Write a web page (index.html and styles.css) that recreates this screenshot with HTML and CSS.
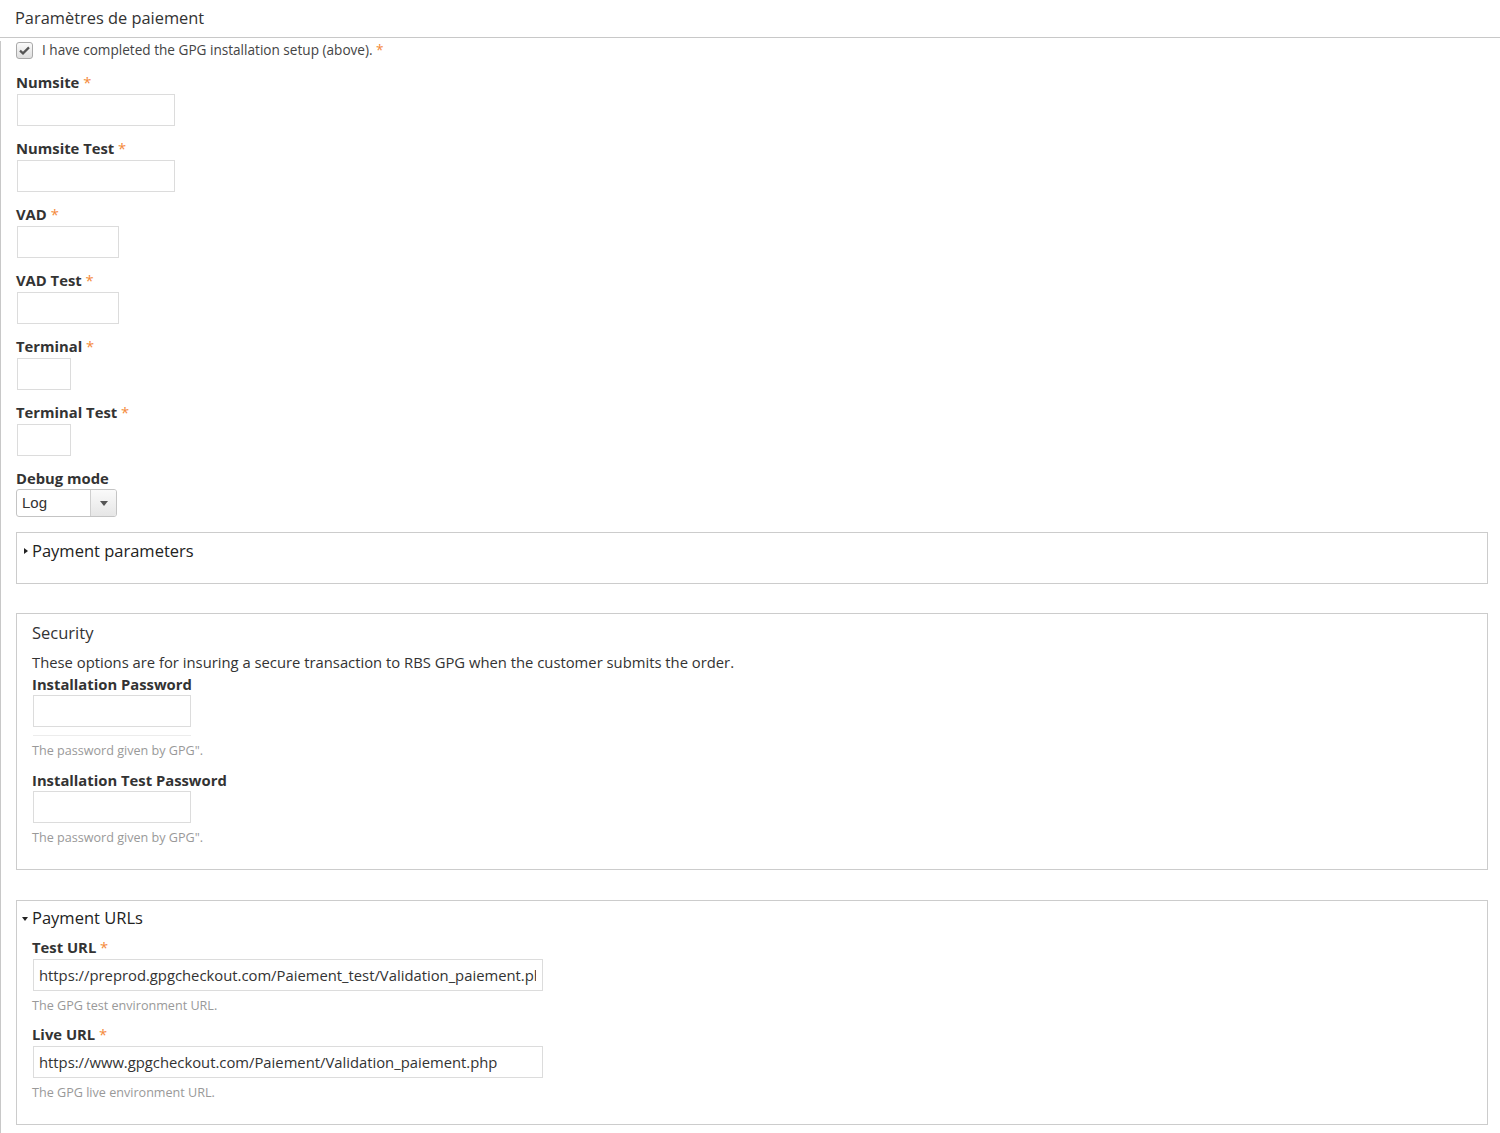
FILE: index.html
```html
<!DOCTYPE html>
<html lang="fr">
<head>
<meta charset="utf-8">
<title>Paramètres de paiement</title>
<link rel="stylesheet" href="styles.css">
</head>
<body>
<div class="outer">
  <div class="outer-legend">Paramètres de paiement</div>
  <div class="outer-body">
    <div class="check-row">
      <span class="checkbox"><svg width="11" height="9" viewBox="0 0 11 9"><path d="M1 4.6 L4 7.4 L10 1.4" fill="none" stroke="#555" stroke-width="2.2"/></svg></span>
      <span class="check-label">I have completed the GPG installation setup (above). <span class="req">*</span></span>
    </div>

    <div class="field">
      <label class="lbl">Numsite <span class="req">*</span></label>
      <input class="inp w158" type="text">
    </div>
    <div class="field">
      <label class="lbl">Numsite Test <span class="req">*</span></label>
      <input class="inp w158" type="text">
    </div>
    <div class="field">
      <label class="lbl">VAD <span class="req">*</span></label>
      <input class="inp w102" type="text">
    </div>
    <div class="field">
      <label class="lbl">VAD Test <span class="req">*</span></label>
      <input class="inp w102" type="text">
    </div>
    <div class="field">
      <label class="lbl">Terminal <span class="req">*</span></label>
      <input class="inp w54" type="text">
    </div>
    <div class="field">
      <label class="lbl">Terminal Test <span class="req">*</span></label>
      <input class="inp w54" type="text">
    </div>
    <div class="field">
      <label class="lbl lbl-select">Debug mode</label>
      <div class="select">
        <span class="select-text">Log</span>
        <span class="select-btn"><span class="select-arrow"></span></span>
      </div>
    </div>

    <div class="box box-collapsed">
      <div class="box-legend"><span class="tri-right"></span>Payment parameters</div>
    </div>

    <div class="box box-security">
      <div class="box-title">Security</div>
      <div class="box-desc">These options are for insuring a secure transaction to RBS GPG when the customer submits the order.</div>
      <label class="lbl lbl-sec">Installation Password</label>
      <input class="inp w158" type="text">
      <div class="sep"></div>
      <div class="desc desc-sep">The password given by GPG".</div>
      <label class="lbl lbl-gap">Installation Test Password</label>
      <input class="inp w158" type="text">
      <div class="desc">The password given by GPG".</div>
    </div>

    <div class="box box-urls">
      <div class="box-legend"><span class="tri-down"></span>Payment URLs</div>
      <label class="lbl lbl-url">Test URL <span class="req">*</span></label>
      <input class="inp url" type="text" value="https://preprod.gpgcheckout.com/Paiement_test/Validation_paiement.php">
      <div class="desc">The GPG test environment URL.</div>
      <label class="lbl lbl-gap2">Live URL <span class="req">*</span></label>
      <input class="inp url" type="text" value="https://www.gpgcheckout.com/Paiement/Validation_paiement.php">
      <div class="desc">The GPG live environment URL.</div>
    </div>
  </div>
</div>
</body>
</html>
```

FILE: styles.css
```css
* { box-sizing: border-box; }
html, body {
  margin: 0;
  padding: 0;
  background: #fff;
}
body {
  font-family: "Open Sans", "Noto Sans", sans-serif;
  color: #333;
  width: 1500px;
  height: 1133px;
  overflow: hidden;
}
.outer {
  width: 1500px;
}
.outer-legend {
  height: 38px;
  padding: 7px 0 0 15px;
  font-size: 16.4px;
  line-height: 22px;
  color: #333;
  border-bottom: 1px solid #c8c8c8;
}
.outer-body {
  border-left: 1px solid #c8c8c8;
  padding: 0 12px 20px 15px;
}
.check-row {
  display: flex;
  align-items: center;
  margin-top: 3px;
  height: 19px;
}
.checkbox {
  width: 17px;
  height: 17px;
  border: 1px solid #a9a9a9;
  border-radius: 3px;
  background: linear-gradient(#fbfbfb, #dedede);
  display: flex;
  align-items: center;
  justify-content: center;
  margin-right: 9px;
}
.check-label {
  font-size: 13.6px;
  color: #444;
  line-height: 19px;
  position: relative;
  top: -1px;
}
.req {
  color: #f4893a;
  font-weight: normal;
}
.field {
  margin-top: 12px;
}
.lbl {
  display: block;
  font-size: 14.8px;
  font-weight: bold;
  line-height: 20px;
  margin-bottom: 2px;
  color: #333;
}
.lbl-select {
  margin-bottom: 1px;
}
.inp {
  display: block;
  height: 32px;
  margin: 0 0 0 1px;
  border: 1px solid #dcdcdc;
  background: #fff;
  font-family: "Open Sans", "Noto Sans", sans-serif;
  font-size: 14.8px;
  color: #333;
  padding: 0 6px 0 5px;
  outline: none;
}
.w158 { width: 158px; }
.w102 { width: 102px; }
.w54 { width: 54px; }
.url { width: 510px; }
.select {
  display: flex;
  width: 101px;
  height: 28px;
  border: 1px solid #c4c4c4;
  border-radius: 3px;
  background: #fff;
  overflow: hidden;
}
.select-text {
  flex: 1;
  font-family: "Liberation Sans", Arial, sans-serif;
  font-size: 15px;
  line-height: 26px;
  padding-left: 5px;
  color: #333;
}
.select-btn {
  width: 26px;
  border-left: 1px solid #cfcfcf;
  background: linear-gradient(#fafafa, #e6e6e6);
  display: flex;
  align-items: center;
  justify-content: center;
}
.select-arrow {
  width: 0;
  height: 0;
  border-left: 4px solid transparent;
  border-right: 4px solid transparent;
  border-top: 5px solid #555;
}
.box {
  border: 1px solid #ccc;
  width: 1472px;
}
.box-collapsed {
  margin-top: 15px;
  height: 52px;
  padding: 7px 0 0 7px;
}
.box-legend {
  font-size: 16.5px;
  line-height: 22px;
  color: #222;
  display: flex;
  align-items: center;
}
.tri-right {
  width: 0;
  height: 0;
  border-top: 3.5px solid transparent;
  border-bottom: 3.5px solid transparent;
  border-left: 4px solid #222;
  margin-right: 4px;
}
.tri-down {
  width: 0;
  height: 0;
  border-left: 3.5px solid transparent;
  border-right: 3.5px solid transparent;
  border-top: 4px solid #222;
  margin: 2px 4px 0 0;
}
.box-security {
  margin-top: 29px;
  height: 257px;
  padding: 8px 0 0 15px;
}
.box-title {
  font-size: 16.5px;
  line-height: 22px;
  color: #333;
}
.box-desc {
  font-size: 14.8px;
  line-height: 20px;
  margin-top: 8px;
  color: #333;
}
.lbl-sec {
  margin-top: 2px;
  margin-bottom: 1px;
}
.sep {
  width: 158px;
  margin-left: 1px;
  margin-top: 8px;
  border-top: 1px solid #ececec;
}
.desc {
  font-size: 12.6px;
  line-height: 18px;
  color: #999;
  margin-top: 6px;
}
.desc-sep {
  margin-top: 6px;
}
.lbl-gap {
  margin-top: 10px;
  margin-bottom: 1px;
}
.box-urls {
  margin-top: 30px;
  height: 225px;
  padding: 6px 0 0 5px;
}
.box-urls .lbl, .box-urls .desc {
  margin-left: 10px;
}
.box-urls .inp {
  margin-left: 11px;
}
.lbl-url {
  margin-top: 8px;
}
.lbl-gap2 {
  margin-top: 9px;
}
```
